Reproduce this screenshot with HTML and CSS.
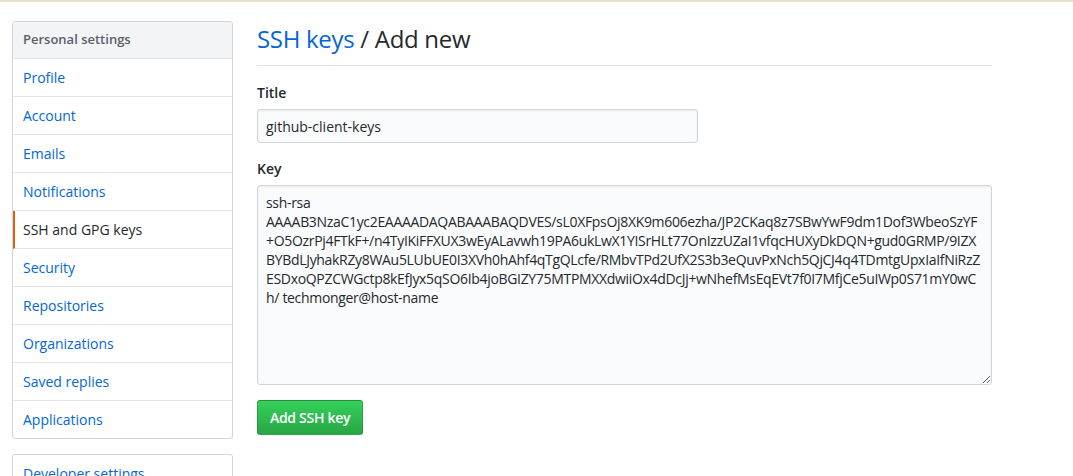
FILE: index.html
```html
<!DOCTYPE html>
<html lang="en">
<head>
    <meta charset="UTF-8">
    <title>SSH keys / Add new</title>
    <link rel="stylesheet" href="styles.css">
</head>
<body>
    <div class="page">
        <div class="sidebar">
            <nav class="menu">
                <div class="menu-heading">Personal settings</div>
                <a class="menu-item" href="#">Profile</a>
                <a class="menu-item" href="#">Account</a>
                <a class="menu-item" href="#">Emails</a>
                <a class="menu-item" href="#">Notifications</a>
                <a class="menu-item selected" href="#">SSH and GPG keys</a>
                <a class="menu-item" href="#">Security</a>
                <a class="menu-item" href="#">Repositories</a>
                <a class="menu-item" href="#">Organizations</a>
                <a class="menu-item" href="#">Saved replies</a>
                <a class="menu-item" href="#">Applications</a>
            </nav>
            <nav class="menu">
                <a class="menu-item" href="#">Developer settings</a>
            </nav>
        </div>

        <div class="main">
            <div class="subhead">
                <a href="#">SSH keys</a> / Add new
            </div>

            <form class="key-form">
                <div class="form-group">
                    <label for="title">Title</label>
                    <input type="text" id="title" class="form-control title-input" value="github-client-keys">
                </div>

                <div class="form-group">
                    <label for="key">Key</label>
                    <textarea id="key" class="form-control key-input" spellcheck="false">ssh-rsa
AAAAB3NzaC1yc2EAAAADAQABAAABAQDVES/sL0XFpsOj8XK9m606ezha/JP2CKaq8z7SBwYwF9dm1Dof3WbeoSzYF
+O5OzrPj4FTkF+/n4TyIKiFFXUX3wEyALavwh19PA6ukLwX1YISrHLt77OnIzzUZaI1vfqcHUXyDkDQN+gud0GRMP/9IZX
BYBdLJyhakRZy8WAu5LUbUE0I3XVh0hAhf4qTgQLcfe/RMbvTPd2UfX2S3b3eQuvPxNch5QjCJ4q4TDmtgUpxIaIfNiRzZ
ESDxoQPZCWGctp8kEfJyx5qSO6Ib4joBGIZY75MTPMXXdwiiOx4dDcJj+wNhefMsEqEVt7f0I7MfjCe5uIWp0S71mY0wC
h/ techmonger@host-name</textarea>
                </div>

                <button type="button" class="btn-primary">Add SSH key</button>
            </form>
        </div>
    </div>
</body>
</html>
```

FILE: styles.css
```css
* {
    margin: 0;
    padding: 0;
    box-sizing: border-box;
}

body {
    font-family: "Open Sans", Arial, sans-serif;
    font-size: 14px;
    line-height: 1.5;
    color: #24292e;
    background: white;
    border-top: 2px solid #e6e1c8;
}

a {
    color: #0366d6;
    text-decoration: none;
}

.page {
    display: flex;
    gap: 24px;
    padding: 19px 12px 0;
}

/* menu lateral */
.sidebar {
    width: 221px;
    flex-shrink: 0;
    display: flex;
    flex-direction: column;
    gap: 15px;
}

.menu {
    border: 1px solid #d1d5da;
    border-radius: 3px;
    background: white;
}

.menu-heading {
    background: #f3f4f6;
    color: #586069;
    font-size: 13px;
    font-weight: 600;
    padding: 8px 10px;
    border-bottom: 1px solid #e1e4e8;
    border-radius: 3px 3px 0 0;
}

.menu-item {
    display: block;
    padding: 8px 10px;
    border-bottom: 1px solid #e1e4e8;
    line-height: 21px;
}

.menu-item:last-child {
    border-bottom: none;
}

.menu-item.selected {
    color: #24292e;
    border-left: 2px solid #e36209;
    padding-left: 8px;
}

/* contenido */
.main {
    width: 735px;
}

.subhead {
    font-size: 24px;
    line-height: 36px;
    letter-spacing: -0.3px;
    padding-bottom: 8px;
    border-bottom: 1px solid #e1e4e8;
    margin-bottom: 16px;
}

.form-group {
    margin-bottom: 15px;
}

.form-group label {
    display: block;
    font-weight: 600;
    line-height: 21px;
    margin-bottom: 6px;
}

.form-control {
    display: block;
    font-family: "Open Sans", Arial, sans-serif;
    font-size: 14px;
    color: #24292e;
    background: #fafbfc;
    border: 1px solid #d1d5da;
    border-radius: 3px;
    box-shadow: inset 0 1px 2px rgba(27,31,35,0.075);
    padding: 6px 8px;
}

.form-control:focus {
    outline: none;
    border-color: #2188ff;
    background: white;
}

.title-input {
    width: 441px;
    height: 34px;
}

.key-input {
    width: 735px;
    height: 200px;
    line-height: 19px;
    letter-spacing: -0.32px;
    padding-top: 7px;
    resize: vertical;
    overflow: hidden;
}

.btn-primary {
    font-family: "Open Sans", Arial, sans-serif;
    font-size: 14px;
    font-weight: 600;
    letter-spacing: -0.3px;
    white-space: nowrap;
    color: white;
    background: linear-gradient(#34d058, #28a745);
    border: 1px solid rgba(27,31,35,0.2);
    border-radius: 3px;
    padding: 0 12px;
    height: 35px;
    cursor: pointer;
}

.btn-primary:hover {
    background: linear-gradient(#2fcb53, #269f42);
}
```
